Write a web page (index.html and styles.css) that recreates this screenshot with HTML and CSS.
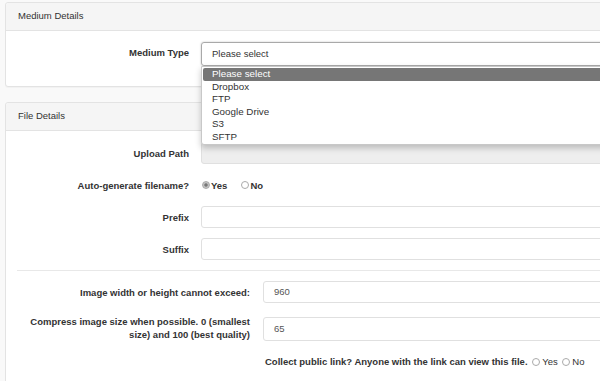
FILE: index.html
```html
<!DOCTYPE html>
<html lang="en">
<head>
    <meta charset="UTF-8">
    <title>Medium Settings</title>
<link rel="stylesheet" href="styles.css">
</head>
<body>
<div class="page">

<!-- Medium Details -->
<div class="panel">
    <div class="panel-heading">Medium Details</div>
    <div class="panel-body medium-body">
        <div class="form-row">
            <label class="control-label medium-label">Medium Type</label>
            <div class="select-wrap">
                <div class="select">Please select</div>
                <ul class="dropdown">
                    <li class="active">Please select</li>
                    <li>Dropbox</li>
                    <li>FTP</li>
                    <li>Google Drive</li>
                    <li>S3</li>
                    <li>SFTP</li>
                </ul>
            </div>
        </div>
    </div>
</div>

<!-- File Details -->
<div class="panel">
    <div class="panel-heading">File Details</div>
    <div class="panel-body file-body">
        <div class="form-row">
            <label class="control-label">Upload Path</label>
            <div class="input disabled"></div>
        </div>
        <div class="form-row">
            <label class="control-label">Auto-generate filename?</label>
            <div class="radios">
                <span class="radio checked"></span><b>Yes</b>
                <span class="radio no"></span><b>No</b>
            </div>
        </div>
        <div class="form-row">
            <label class="control-label">Prefix</label>
            <div class="input"></div>
        </div>
        <div class="form-row">
            <label class="control-label">Suffix</label>
            <div class="input"></div>
        </div>

        <hr>

        <div class="form-row wide">
            <label class="control-label">Image width or height cannot exceed:</label>
            <div class="input">960</div>
        </div>
        <div class="form-row wide compress">
            <label class="control-label">Compress image size when possible. 0 (smallest size) and 100 (best quality)</label>
            <div class="input tall">65</div>
        </div>
        <div class="form-row wide collect">
            <span></span>
            <div class="collect-text">
                <b>Collect public link? Anyone with the link can view this file.</b>
                <span class="radio small"></span>Yes <span class="radio small"></span>No
            </div>
        </div>
    </div>
</div>

</div>
</body>
</html>
```

FILE: styles.css
```css
html, body {
    margin: 0;
    padding: 0;
    overflow: hidden;
}
body {
    font-family: 'Liberation Sans', Arial, sans-serif;
    font-size: 9.5px;
    color: #333;
    background: #f9f9f9;
}
.page {
    padding: 2px 0 0 5px;
    width: 720px;
}
.panel {
    background: #fff;
    border: 1px solid #e3e3e3;
    border-radius: 3px;
    margin-bottom: 15px;
    box-shadow: 0 1px 1px rgba(0,0,0,0.03);
}
.panel-heading {
    height: 27px;
    line-height: 26px;
    padding: 0 12px;
    background: #f5f5f5;
    border-bottom: 1px solid #e3e3e3;
    border-radius: 3px 3px 0 0;
}
.medium-body {
    padding: 11px 0 20px;
}
.file-body {
    padding: 11px 0 20px;
}
.form-row {
    display: grid;
    grid-template-columns: 183px 1fr;
    column-gap: 12px;
    align-items: center;
    margin-bottom: 10px;
}
.form-row:last-child {
    margin-bottom: 0;
}
.form-row.wide {
    grid-template-columns: 244px 1fr;
    column-gap: 13px;
}
.form-row.wide .control-label {
    padding-left: 22px;
}
.control-label {
    font-weight: bold;
    text-align: right;
    line-height: 13px;
}
.medium-label {
    padding-bottom: 4px;
}
.select-wrap {
    position: relative;
}
.select {
    height: 22px;
    line-height: 22px;
    padding: 0 10px;
    border: 1px solid #a9a9a9;
    border-radius: 3px;
    box-shadow: 0 0 2px rgba(0,0,0,0.25);
}
.dropdown {
    position: absolute;
    left: 0;
    top: 24px;
    right: 0;
    margin: 0;
    padding: 1px;
    list-style: none;
    background: #fff;
    border: 1px solid #c8c8c8;
    border-radius: 0 0 3px 3px;
    box-shadow: 0 3px 6px rgba(0,0,0,0.22);
    z-index: 5;
}
.dropdown li {
    height: 12.5px;
    line-height: 12.5px;
    padding-left: 9px;
    font-size: 9.8px;
    color: #333;
}
.dropdown li.active {
    background: #767676;
    color: #fff;
    border-radius: 2px 0 0 2px;
}
.input {
    height: 20px;
    line-height: 20px;
    padding: 0 10px;
    border: 1px solid #e0e0e0;
    border-radius: 3px;
    color: #555;
    background: #fff;
}
.input.tall {
    height: 22px;
    line-height: 22px;
}
.input.disabled {
    background: #eee;
}
.radios {
    height: 22px;
    display: flex;
    align-items: center;
    padding-left: 1px;
}
.radios b {
    margin-right: 14px;
}
.radio {
    display: inline-block;
    box-sizing: border-box;
    width: 8px;
    height: 8px;
    border: 1px solid #aaa;
    border-radius: 50%;
    background: #fff;
    margin-right: 1px;
    vertical-align: -1px;
}
.radio.checked {
    background: radial-gradient(circle, #777 0, #777 1.2px, #c4c4c4 2.2px);
    border-color: #aaa;
}
.radio.small {
    margin: 0 2px 0 2px;
}
hr {
    border: 0;
    border-top: 1px solid #e8e8e8;
    margin: 10px 0 10px 11px;
}
.compress {
    margin-top: 12px;
}
.compress .input {
    margin-top: 1px;
}
.collect {
    margin-top: 14px;
}
.collect-text {
    padding-left: 2px;
    line-height: 14px;
    white-space: nowrap;
}
```
